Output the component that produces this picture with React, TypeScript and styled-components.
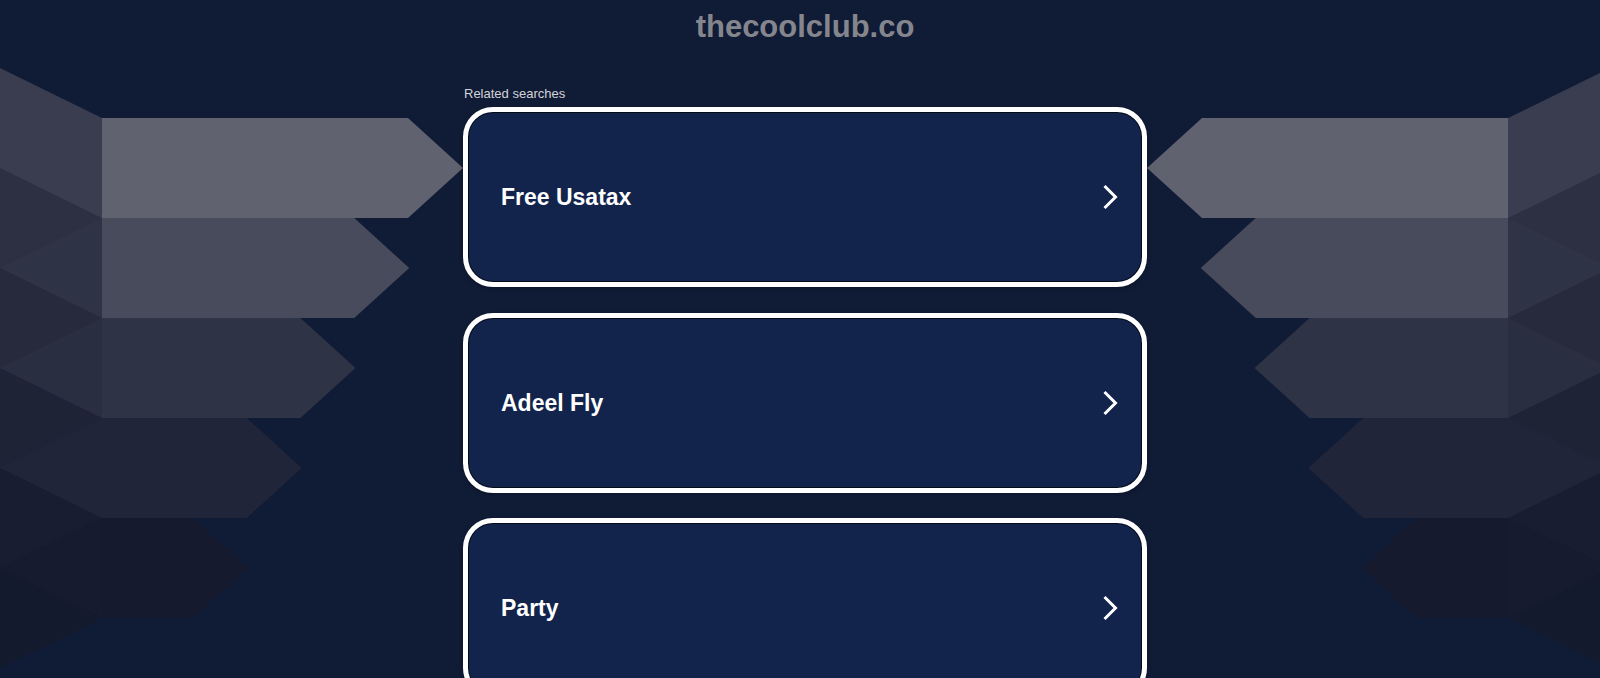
import React from "react";
import styled, { createGlobalStyle } from "styled-components";

const GlobalStyle = createGlobalStyle`
  html, body {
    margin: 0;
    padding: 0;
    background: #101b36;
    overflow: hidden;
  }
  * { box-sizing: border-box; }
`;

const Page = styled.div`
  position: relative;
  width: 1610px;
  height: 678px;
  background: #101b36;
  font-family: "Liberation Sans", Arial, sans-serif;
  overflow: hidden;
`;

const Backdrop = styled.svg`
  position: absolute;
  left: 0;
  top: 0;
  z-index: 0;
  pointer-events: none;
`;

const Content = styled.div`
  position: relative;
  z-index: 1;
  display: flex;
  flex-direction: column;
  align-items: center;
  padding-top: 9px;
`;

const Title = styled.h1`
  margin: 0;
  font-size: 31px;
  line-height: 36px;
  font-weight: 700;
  color: #85868d;
`;

const Main = styled.main`
  width: 684px;
  margin-top: 41px;
  display: flex;
  flex-direction: column;
`;

const Label = styled.div`
  font-size: 13px;
  line-height: 15px;
  color: #d4d4d8;
  padding-left: 1px;
  margin-bottom: 6px;
`;

const List = styled.div`
  display: flex;
  flex-direction: column;
  gap: 25.5px;
`;

const Card = styled.a`
  display: flex;
  align-items: center;
  justify-content: space-between;
  height: 180px;
  padding: 0 24px 0 33px;
  border: 5px solid #ffffff;
  border-radius: 30px;
  background: #12244b;
  box-shadow: inset 0 0 0 1px #050a18, 0 2px 4px rgba(0, 0, 0, 0.25);
  text-decoration: none;
  cursor: pointer;
`;

const CardText = styled.span`
  font-size: 23px;
  font-weight: 700;
  color: #ffffff;
  line-height: 26px;
`;

const Chevron = styled.svg`
  width: 16px;
  height: 26px;
  flex: none;
`;

type Bar = { face: string; p: string; q: string };

const bars: Bar[] = [
  { face: "#60636f", p: "#3a3d4f", q: "#2d3042" },
  { face: "#484b5b", p: "#2f3346", q: "#262a3c" },
  { face: "#2f3346", p: "#2a2e41", q: "#1f2336" },
  { face: "#20253a", p: "#21253a", q: "#181d31" },
  { face: "#161a2e", p: "#171b2f", q: "#141a2e" },
];

const COL = 102;

function SideShapes() {
  const shapes: React.ReactNode[] = [];
  // paint from bottom bar to top bar so upper bars sit on top
  for (let i = bars.length - 1; i >= 0; i--) {
    const b = bars[i];
    const T = 118 + 100 * i;
    const B = T + 100;
    const S = 408 - 53.75 * i;
    const tip = S + 55;
    shapes.push(
      <polygon
        key={`q${i}`}
        points={`0,${T + 50} ${COL},${T} ${COL},${B} 0,${B + 50}`}
        fill={b.q}
      />,
      <polygon
        key={`p${i}`}
        points={`0,${T - 50} ${COL},${T} ${COL},${B} 0,${B - 50}`}
        fill={b.p}
      />,
      <polygon
        key={`f${i}`}
        points={`${COL},${T} ${S},${T} ${tip},${T + 50} ${S},${B} ${COL},${B}`}
        fill={b.face}
      />
    );
  }
  return <>{shapes}</>;
}

const items = ["Free Usatax", "Adeel Fly", "Party"];

export default function App() {
  return (
    <>
      <GlobalStyle />
      <Page>
        <Backdrop width="1610" height="678" viewBox="0 0 1610 678" aria-hidden="true">
          <g>
            <SideShapes />
          </g>
          <g transform="translate(1610,0) scale(-1,1)">
            <SideShapes />
          </g>
        </Backdrop>
        <Content>
          <Title>thecoolclub.co</Title>
          <Main>
            <Label>Related searches</Label>
            <List>
              {items.map((t) => (
                <Card key={t}>
                  <CardText>{t}</CardText>
                  <Chevron viewBox="0 0 16 26">
                    <polyline
                      points="2.5,2 13.5,13 2.5,24"
                      fill="none"
                      stroke="#ffffff"
                      strokeWidth="3"
                      strokeLinejoin="miter"
                    />
                  </Chevron>
                </Card>
              ))}
            </List>
          </Main>
        </Content>
      </Page>
    </>
  );
}
